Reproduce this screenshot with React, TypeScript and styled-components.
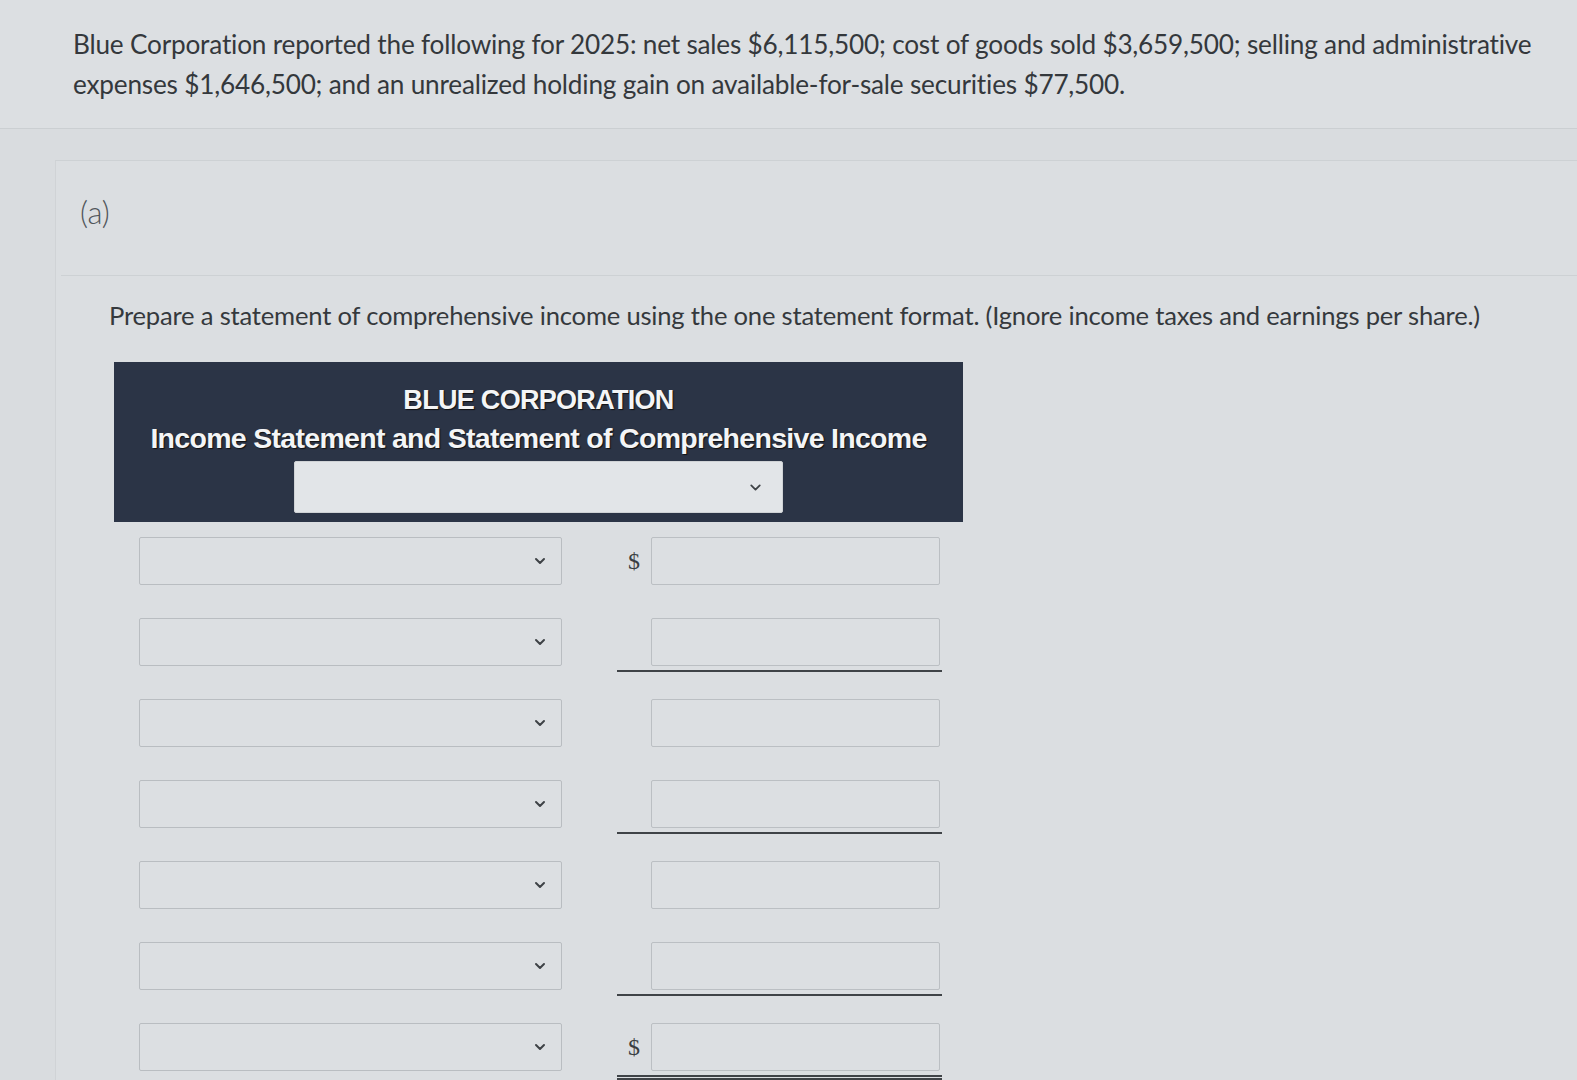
import styled, { createGlobalStyle } from "styled-components";
import { ChevronDown } from "lucide-react";

const GlobalStyle = createGlobalStyle`
  html, body {
    margin: 0;
    padding: 0;
    background: #d9dcdf;
    font-family: Lato, "Open Sans", sans-serif;
    color: #35393d;
  }
`;

const Page = styled.div`
  width: 1577px;
  height: 1080px;
  overflow: hidden;
  background: #d9dcdf;
`;

const Question = styled.div`
  padding: 24px 34px 0 73px;
  height: 104px;
  border-bottom: 1px solid #cbcfd2;
  font-size: 26.2px;
  line-height: 40px;
  letter-spacing: -0.2px;
  color: #34383c;
  background: #dcdfe2;
`;

const PartPanel = styled.section`
  margin: 31px 0 0 55px;
  border-top: 1px solid #cdd1d4;
  border-left: 1px solid #d0d3d6;
  background: #dbdee1;
`;

const PartLabel = styled.div`
  height: 114px;
  padding: 32px 0 0 24px;
  box-sizing: border-box;
  font-size: 31px;
  font-weight: 300;
  color: #50555a;
`;

const PartBody = styled.div`
  border-top: 1px solid #cdd1d4;
  margin-left: 5px;
  padding: 21px 0 0 48px;
`;

const Instruction = styled.p`
  margin: 0;
  font-size: 25.6px;
  line-height: 36px;
  letter-spacing: -0.2px;
  color: #35393d;
`;

const StatementHeader = styled.div`
  margin: 29px 0 0 5px;
  width: 849px;
  height: 160px;
  box-sizing: border-box;
  padding-top: 19px;
  background: #2b3446;
  display: flex;
  flex-direction: column;
  align-items: center;
  font-family: "Liberation Sans", Arial, sans-serif;
  font-weight: 700;
  color: #f4f5f6;
  text-shadow: 1px 1px 1px #111;
`;

const HeaderLine = styled.div<{ $size: number }>`
  font-size: ${(p) => p.$size}px;
  line-height: 38px;
  letter-spacing: -0.7px;
`;

const SelectBox = styled.div<{ $width: number; $height: number }>`
  width: ${(p) => p.$width}px;
  height: ${(p) => p.$height}px;
  box-sizing: border-box;
  border: 1px solid #b9bdc1;
  border-radius: 2px;
  background: #dcdfe2;
  display: flex;
  align-items: center;
  justify-content: flex-end;
  padding-right: 13px;
  color: #3e4246;
`;

const HeaderSelect = styled(SelectBox)`
  margin-top: 4px;
  padding-right: 18px;
  background: #e2e5e8;
  border-color: #cfd2d5;
`;

const Rows = styled.div`
  margin: 15px 0 0 30px;
  display: flex;
  flex-direction: column;
  gap: 27px;
`;

const Row = styled.div`
  display: grid;
  grid-template-columns: 423px 55px 325px;
  align-items: start;
`;

const AmountCell = styled.div<{ $rule: "none" | "single" | "double" }>`
  grid-column: 3;
  display: flex;
  align-items: center;
  height: 48px;
  padding-bottom: 4px;
  border-bottom: ${(p) =>
    p.$rule === "single"
      ? "2px solid #3f4347"
      : p.$rule === "double"
      ? "5px double #3f4347"
      : "2px solid transparent"};
`;

const Dollar = styled.span`
  width: 34px;
  text-align: center;
  font-family: "Liberation Serif", serif;
  font-size: 24px;
  color: #3a3e42;
`;

const AmountInput = styled.div`
  width: 289px;
  height: 48px;
  box-sizing: border-box;
  border: 1px solid #bbbfc3;
  border-radius: 2px;
  background: #dcdfe2;
`;

type Line = { dollar: boolean; rule: "none" | "single" | "double" };

const lines: Line[] = [
  { dollar: true, rule: "none" },
  { dollar: false, rule: "single" },
  { dollar: false, rule: "none" },
  { dollar: false, rule: "single" },
  { dollar: false, rule: "none" },
  { dollar: false, rule: "single" },
  { dollar: true, rule: "double" },
];

export default function App() {
  return (
    <Page>
      <GlobalStyle />
      <Question>
        Blue Corporation reported the following for 2025: net sales $6,115,500; cost of goods sold
        $3,659,500; selling and administrative expenses $1,646,500; and an unrealized holding gain
        on available-for-sale securities $77,500.
      </Question>
      <PartPanel>
        <PartLabel>(a)</PartLabel>
        <PartBody>
          <Instruction>
            Prepare a statement of comprehensive income using the one statement format. (Ignore
            income taxes and earnings per share.)
          </Instruction>
          <StatementHeader>
            <HeaderLine $size={27}>BLUE CORPORATION</HeaderLine>
            <HeaderLine $size={28.5}>Income Statement and Statement of Comprehensive Income</HeaderLine>
            <HeaderSelect $width={489} $height={52}>
              <ChevronDown size={17} strokeWidth={2.5} />
            </HeaderSelect>
          </StatementHeader>
          <Rows>
            {lines.map((l, i) => (
              <Row key={i}>
                <SelectBox $width={423} $height={48}>
                  <ChevronDown size={16} strokeWidth={3} />
                </SelectBox>
                <AmountCell $rule={l.rule}>
                  <Dollar>{l.dollar ? "$" : ""}</Dollar>
                  <AmountInput />
                </AmountCell>
              </Row>
            ))}
          </Rows>
        </PartBody>
      </PartPanel>
    </Page>
  );
}
